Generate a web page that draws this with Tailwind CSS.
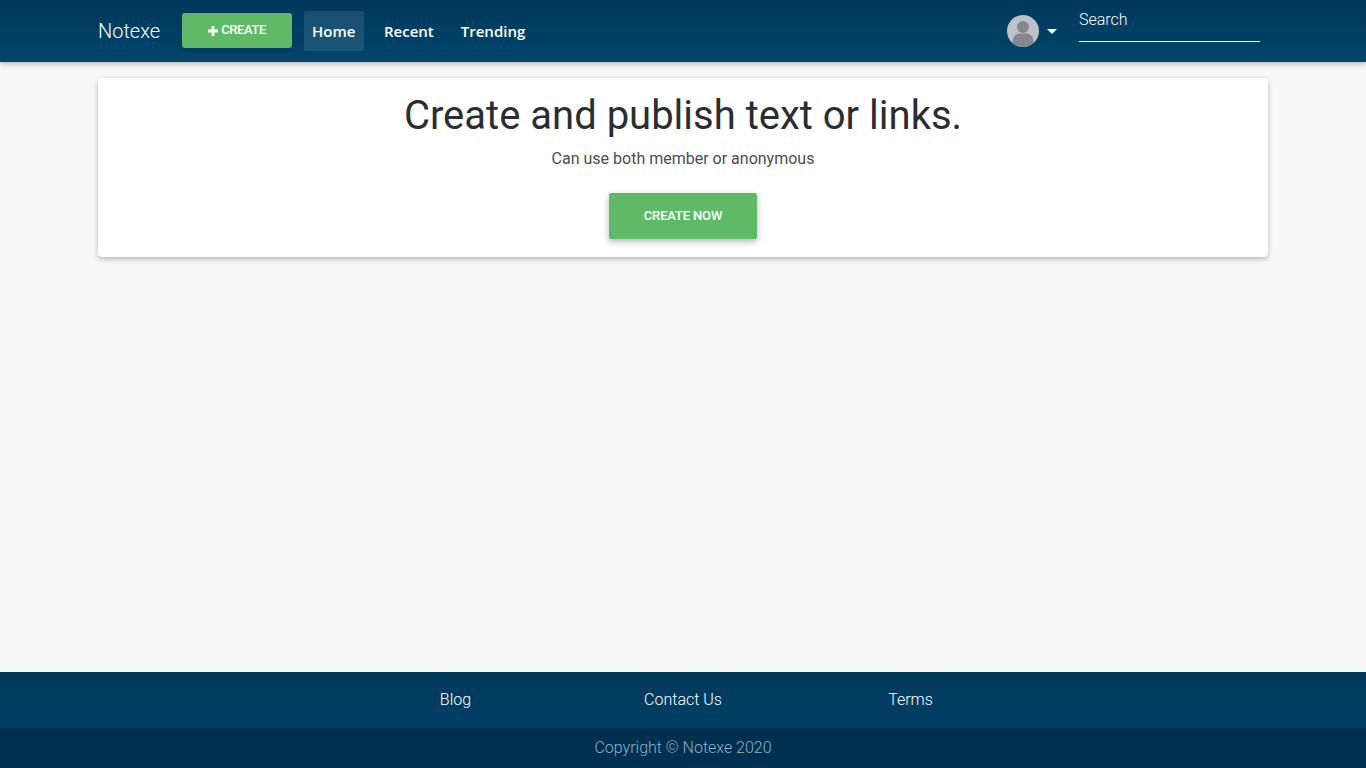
<!DOCTYPE html>
<html lang="en">
<head>
    <meta charset="UTF-8">
    <meta name="viewport" content="width=device-width, initial-scale=1.0">
    <title>Notexe</title>
    <script src="https://cdn.jsdelivr.net/npm/@tailwindcss/browser@4"></script>
</head>
<body class="bg-[#f7f7f7] font-['Roboto',sans-serif] h-[768px] flex flex-col overflow-hidden">
    <nav class="relative z-10 h-[62px] bg-gradient-to-b from-[#01385b] to-[#00456c] shadow-[0_2px_5px_rgba(0,0,0,0.26)] flex items-center pl-[98px] pr-[106px]">
        <a href="#" class="text-[20px] font-light text-white w-[84px]">Notexe</a>
        <a href="#" class="w-[110px] h-[35px] bg-[#5fba68] rounded-[3px] shadow-[0_2px_5px_rgba(0,0,0,0.2)] text-white text-[13px] font-medium flex items-center justify-center gap-[3px] mb-[1px]">
            <svg class="w-[10px] h-[10px]" viewBox="0 0 10 10" fill="white"><path d="M3.6 0h2.8v3.6H10v2.8H6.4V10H3.600V6.4H0V3.6h3.6z"/></svg>
            <span class="relative top-[-0.5px] tracking-[-0.4px]">CREATE</span>
        </a>
        <div class="ml-[12px] flex items-center font-['Open_Sans',sans-serif] font-semibold text-[15px] text-white">
            <a href="#" class="h-[40px] w-[60px] pl-[8px] flex items-center bg-white/10 rounded-[2px]">Home</a>
            <a href="#" class="ml-[12px] px-[8px]">Recent</a>
            <a href="#" class="ml-[11px] px-[8px]">Trending</a>
        </div>
        <div class="ml-auto flex items-center">
            <svg class="w-[32px] h-[32px]" viewBox="0 0 32 32">
                <circle cx="16" cy="16" r="16" fill="#bfc1c8"/>
                <circle cx="16" cy="12" r="6" fill="#85878d"/>
                <path d="M5.500 28 C5.500 21 9 18.500 13 18.500 L19 18.500 C23 18.500 26.500 21 26.500 28 A16 16 0 0 1 5.500 28z" fill="#85878d"/>
            </svg>
            <span class="ml-[8px] w-0 h-0 border-x-[5px] border-x-transparent border-t-[5px] border-t-white"></span>
            <div class="ml-[22px] w-[181px] h-[42px] border-b border-white text-white text-[16px] font-light mt-[-21px] pt-[8px]">Search</div>
        </div>
    </nav>

    <main class="flex-1 px-[98px] pt-[16px]">
        <section class="h-[179px] bg-white rounded-[4px] shadow-[0_2px_5px_rgba(0,0,0,0.26)] flex flex-col items-center">
            <h1 class="mt-[14px] text-[40px] leading-[48px] text-[#2a2d31]">Create and publish text or links.</h1>
            <p class="mt-[7px] text-[16px] font-normal leading-[24px] text-[#4a4d51]">Can use both member or anonymous</p>
            <a href="#" class="mt-[22px] w-[148px] h-[46px] bg-[#5fba68] rounded-[2px] shadow-[0_3px_7px_rgba(0,0,0,0.28)] text-white text-[13px] font-medium tracking-[-0.15px] flex items-center justify-center">CREATE NOW</a>
        </section>
    </main>

    <footer class="text-[16px] font-light">
        <div class="h-[56px] bg-gradient-to-b from-[#01385b] to-[#004066] text-white relative">
            <div class="grid grid-cols-3 w-[684px] mx-auto h-full items-center text-center">
                <a href="#" class="pl-[1px]">Blog</a>
                <a href="#">Contact Us</a>
                <a href="#" class="pr-[1px]">Terms</a>
            </div>
        </div>
        <div class="h-[40px] bg-[#00304f] text-[#8fb0c4] flex items-center justify-center">Copyright © Notexe 2020</div>
    </footer>
</body>
</html>
